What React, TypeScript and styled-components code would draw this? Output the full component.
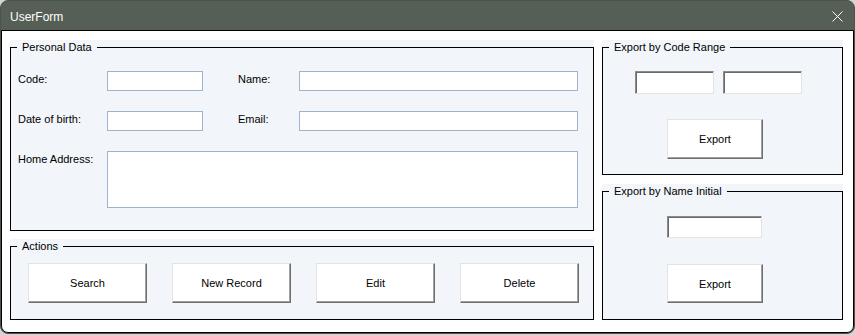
import React from "react";
import styled, { createGlobalStyle } from "styled-components";

const GlobalStyle = createGlobalStyle`
  html, body {
    margin: 0;
    padding: 0;
    background: #d2d6d6;
  }
  * {
    box-sizing: border-box;
  }
  body {
    font-family: "Liberation Sans", Arial, sans-serif;
    font-size: 11px;
    color: #000;
  }
`;

const FRAME_BG = "#f2f5fa";

const Window = styled.div`
  width: 855px;
  height: 334px;
  display: flex;
  flex-direction: column;
  background: #555f55;
  border: 1px solid #4b544b;
  border-radius: 8px;
  overflow: hidden;
`;

const TitleBar = styled.div`
  height: 29px;
  flex: none;
  display: flex;
  align-items: center;
  justify-content: space-between;
  padding: 2px 0 0 9px;
  color: #fff;
  font-size: 12px;
`;

const CloseButton = styled.div`
  width: 34px;
  height: 27px;
  display: flex;
  align-items: center;
  justify-content: center;
`;

const Client = styled.div`
  flex: 1;
  display: flex;
  gap: 8px;
  padding: 9px 0 0 8px;
  background: #fff;
  border: 1px solid #000;
  border-radius: 0 0 7px 7px;
`;

const Column = styled.div<{ $w: number; $gap: number }>`
  width: ${(p) => p.$w}px;
  display: flex;
  flex-direction: column;
  gap: ${(p) => p.$gap}px;
`;

const Frame = styled.section<{ $h: number }>`
  position: relative;
  height: ${(p) => p.$h}px;
  padding-top: 7px;
  background: ${FRAME_BG};
`;

const Legend = styled.span`
  position: absolute;
  top: 0;
  left: 7px;
  padding: 0 5px;
  line-height: 14px;
  background: ${FRAME_BG};
`;

const FrameBody = styled.div<{ $pt: number; $pl: number }>`
  height: 100%;
  border: 1px solid #000;
  padding: ${(p) => p.$pt}px 0 0 ${(p) => p.$pl}px;
`;

const FieldGrid = styled.div`
  display: grid;
  grid-template-columns: 89px 96px 35px 61px 279px;
  grid-template-rows: 20px 20px 57px;
  row-gap: 20px;
  align-items: start;
`;

const Label = styled.label<{ $col: number }>`
  grid-column: ${(p) => p.$col};
  line-height: 13px;
  padding-top: 2px;
  white-space: nowrap;
`;

const TextBox = styled.div<{ $col: string }>`
  grid-column: ${(p) => p.$col};
  height: 100%;
  background: #fff;
  border: 1px solid #9fb3cc;
`;

const ButtonRow = styled.div`
  display: flex;
  gap: 25px;
`;

const Button = styled.div<{ $w: number; $h: number }>`
  width: ${(p) => p.$w}px;
  height: ${(p) => p.$h}px;
  display: flex;
  align-items: center;
  justify-content: center;
  background: #fff;
  border-top: 1px solid #e3e3e3;
  border-left: 1px solid #e3e3e3;
  border-right: 1px solid #6e6e6e;
  border-bottom: 1px solid #6e6e6e;
  box-shadow: inset -1px -1px 0 #a0a0a0;
  font-size: 11px;
`;

const ExportStack = styled.div<{ $gap: number }>`
  display: flex;
  flex-direction: column;
  align-items: flex-start;
  gap: ${(p) => p.$gap}px;
`;

const InputPair = styled.div`
  display: flex;
  gap: 9px;
`;

const SunkenBox = styled.div<{ $w: number; $h: number }>`
  width: ${(p) => p.$w}px;
  height: ${(p) => p.$h}px;
  background: #fff;
  border-top: 1px solid #8a8a8a;
  border-left: 1px solid #8a8a8a;
  border-right: 1px solid #e3e3e3;
  border-bottom: 1px solid #e3e3e3;
  box-shadow: inset 1px 1px 0 #6a6a6a;
`;

const Indent = styled.div<{ $pl: number }>`
  padding-left: ${(p) => p.$pl}px;
`;

const CloseIcon = () => (
  <svg width="11" height="11" viewBox="0 0 11 11">
    <path d="M0.5 0.5 L10.5 10.5 M10.5 0.5 L0.5 10.5" stroke="#fff" strokeWidth="1" />
  </svg>
);

const actions = ["Search", "New Record", "Edit", "Delete"];

export default function App() {
  return (
    <>
      <GlobalStyle />
      <Window>
        <TitleBar>
          <span>UserForm</span>
          <CloseButton>
            <CloseIcon />
          </CloseButton>
        </TitleBar>
        <Client>
          <Column $w={584} $gap={8}>
            <Frame $h={191}>
              <Legend>Personal Data</Legend>
              <FrameBody $pt={23} $pl={7}>
                <FieldGrid>
                  <Label $col={1}>Code:</Label>
                  <TextBox $col="2" />
                  <Label $col={4}>Name:</Label>
                  <TextBox $col="5" />
                  <Label $col={1}>Date of birth:</Label>
                  <TextBox $col="2" />
                  <Label $col={4}>Email:</Label>
                  <TextBox $col="5" />
                  <Label $col={1}>Home Address:</Label>
                  <TextBox $col="2 / 6" />
                </FieldGrid>
              </FrameBody>
            </Frame>
            <Frame $h={81}>
              <Legend>Actions</Legend>
              <FrameBody $pt={16} $pl={17}>
                <ButtonRow>
                  {actions.map((a) => (
                    <Button key={a} $w={119} $h={40}>
                      {a}
                    </Button>
                  ))}
                </ButtonRow>
              </FrameBody>
            </Frame>
          </Column>
          <Column $w={241} $gap={9}>
            <Frame $h={135}>
              <Legend>Export by Code Range</Legend>
              <FrameBody $pt={23} $pl={32}>
                <ExportStack $gap={25}>
                  <InputPair>
                    <SunkenBox $w={79} $h={23} />
                    <SunkenBox $w={79} $h={23} />
                  </InputPair>
                  <Indent $pl={32}>
                    <Button $w={96} $h={40}>Export</Button>
                  </Indent>
                </ExportStack>
              </FrameBody>
            </Frame>
            <Frame $h={136}>
              <Legend>Export by Name Initial</Legend>
              <FrameBody $pt={24} $pl={64}>
                <ExportStack $gap={26}>
                  <SunkenBox $w={95} $h={22} />
                  <Button $w={96} $h={39}>Export</Button>
                </ExportStack>
              </FrameBody>
            </Frame>
          </Column>
        </Client>
      </Window>
    </>
  );
}
